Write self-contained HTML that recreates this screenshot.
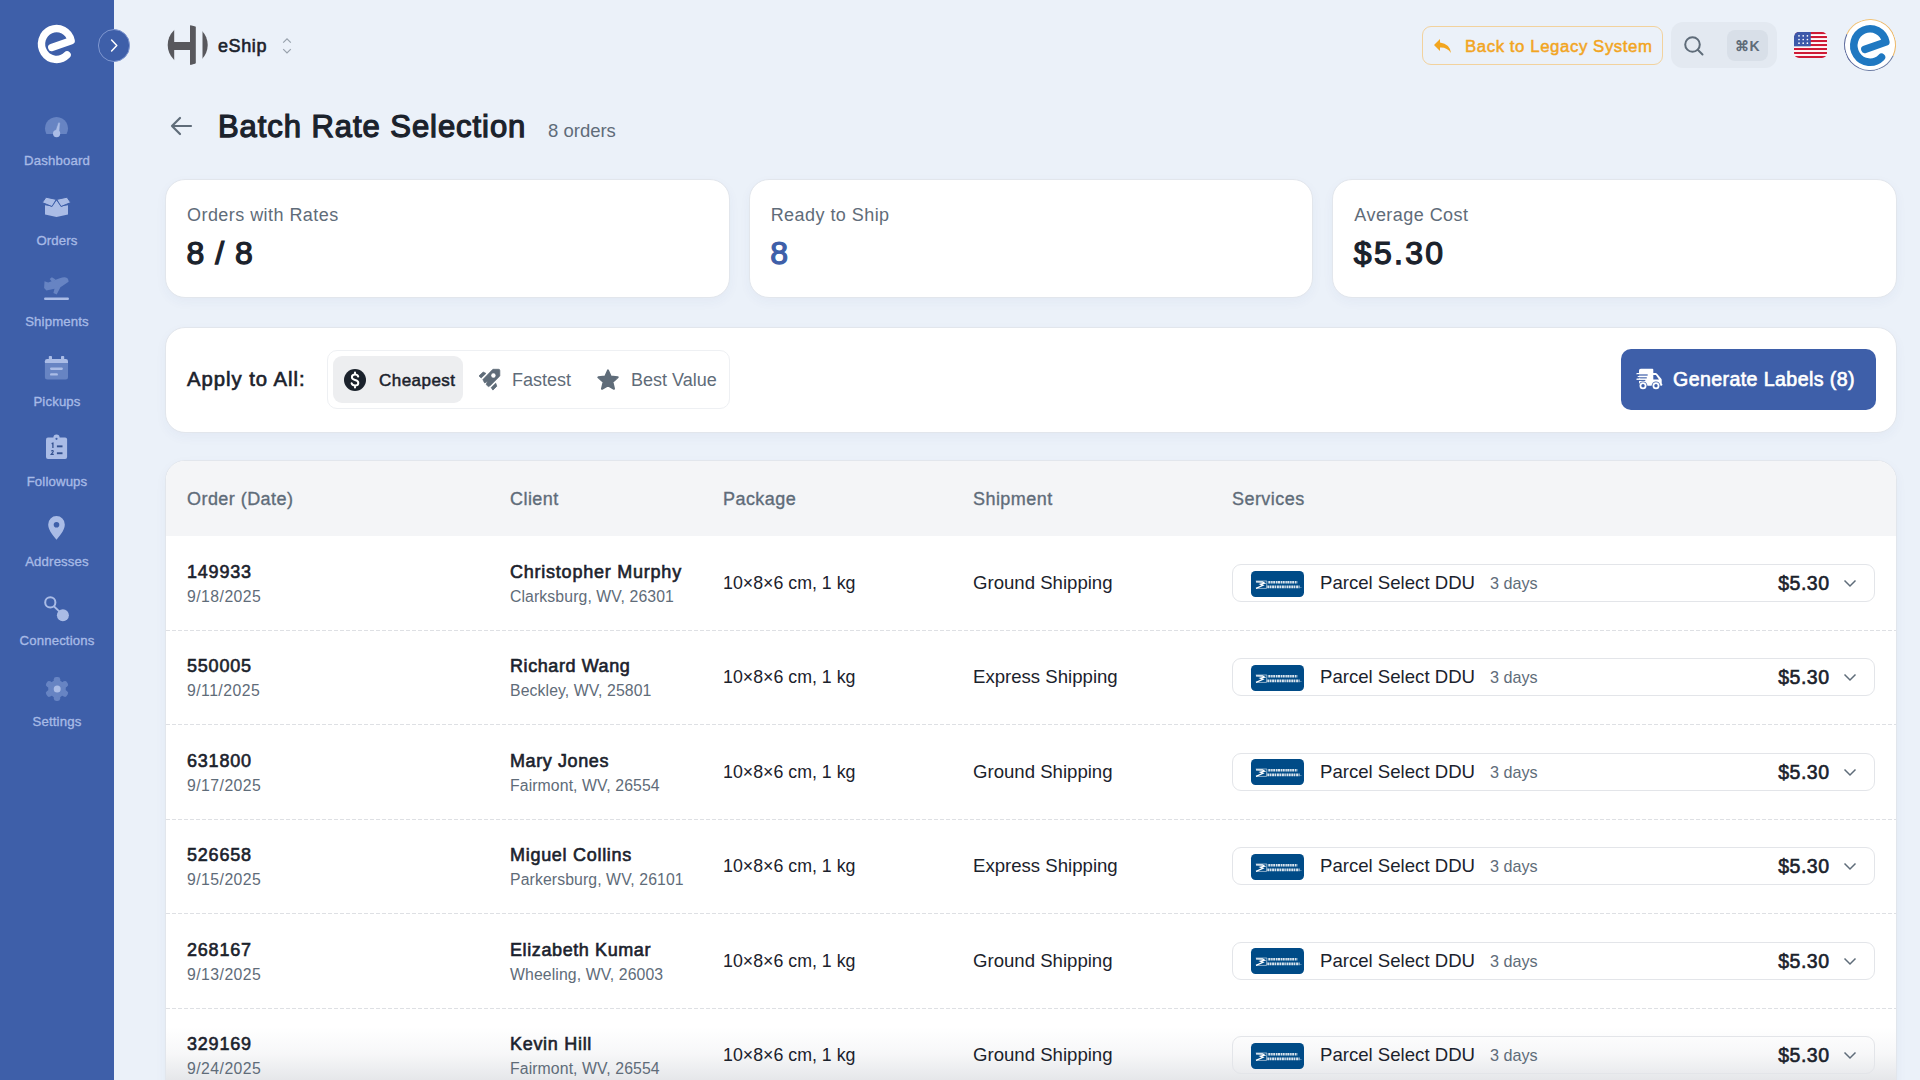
<!DOCTYPE html>
<html><head><meta charset="utf-8">
<style>
*{box-sizing:border-box;margin:0;padding:0}
html,body{width:1920px;height:1080px;overflow:hidden}
body{font-family:"Liberation Sans",sans-serif;background:#EBF1F9;color:#1B222C;position:relative}
svg{position:absolute;overflow:visible}
.sb{position:absolute;left:0;top:0;width:114px;height:1080px;background:#3E5FA9}
.nl{position:absolute;left:0;width:114px;text-align:center;color:#A7BAE6;font-size:13.2px;line-height:13px;letter-spacing:0.15px;white-space:nowrap;-webkit-text-stroke:0.35px #A7BAE6}
.card{position:absolute;background:#fff;border-radius:20px;box-shadow:0 4px 12px rgba(40,70,130,.045);border:1px solid #E2E6EC}
.lbl{position:absolute;left:21px;top:23.5px;font-size:18px;letter-spacing:0.45px;color:#5F6C79;line-height:22px;white-space:nowrap}
.val{position:absolute;left:20.5px;top:54.5px;font-size:32px;color:#1B222C;line-height:36px;white-space:nowrap}
.th{position:absolute;top:487px;font-size:18px;color:#5F6C79;line-height:24px;letter-spacing:0.45px;white-space:nowrap;-webkit-text-stroke:0.35px #5F6C79}
.t{position:absolute;line-height:22px;white-space:nowrap}
.b{font-weight:bold}
.g{color:#5F6C79}
.svc{position:absolute;left:1232px;width:643px;height:38px;border:1px solid #E3E5E9;border-radius:9px}
.div{position:absolute;left:166px;width:1730px;height:1px;background:repeating-linear-gradient(to right,#DEE0E4 0,#DEE0E4 4px,transparent 4px,transparent 6px)}
</style></head><body>

<div class="sb"></div>
<svg style="left:38px;top:25px" width="37" height="38" viewBox="0 0 40 41"><path d="M31.45 32.3 A16.2 16.7 0 1 1 35.85 17 L14.9 24.3" stroke="#fff" stroke-width="8" fill="none" stroke-linecap="round" stroke-linejoin="round"/></svg>
<div style="position:absolute;left:97.5px;top:29.2px;width:32.5px;height:32.5px;border-radius:50%;background:#3E5FA9;border:1px solid #7F97D0"></div>
<svg style="left:0;top:0" width="1" height="1"><path d="M111.6 40 L116.8 45.5 L111.6 51" stroke="#fff" stroke-width="1.5" fill="none" stroke-linecap="round" stroke-linejoin="round"/></svg>
<svg style="left:36px;top:105px" width="40" height="40" viewBox="0 0 40 40"><path d="M10.4 28.9 A11.5 11.5 0 1 1 30.6 28.9 Z" fill="#6784C3"/><path d="M18.8 27.6 L22.2 17.6 Q23.4 16.9 24.2 18 L23.4 28.2 Z" fill="#AABCE6" stroke="#6784C3" stroke-width="0.6"/><circle cx="20.6" cy="28.6" r="3.6" fill="#AABCE6"/></svg>
<div class="nl" style="top:154px">Dashboard</div>
<svg style="left:36px;top:185px" width="40" height="40" viewBox="0 0 40 40"><path d="M9 20.3 L16 21.6 L20.5 15.4 L25 21.6 L32 20.3 L32 29.6 L20.5 32 L9 29.6 Z" fill="#AABCE6"/><path d="M10 12.2 L20.3 14.4 L16 21.5 L6.3 17.6 Z M31 12.2 L20.7 14.4 L25 21.5 L34.7 17.6 Z" fill="#AABCE6" stroke="#3E5FA9" stroke-width="1" stroke-linejoin="round"/></svg>
<div class="nl" style="top:234px">Orders</div>
<svg style="left:36px;top:265px" width="40" height="40" viewBox="0 0 40 40"><path d="M8.5 16.3 L12.2 17.4 L23.7 13.3 Q27 12 28.9 12.2 Q32.6 12.6 32.6 16.7 L26.7 20.7 L24.4 22.2 L20.7 29.6 L17.4 28.1 L18.5 23.7 L10.4 25.6 L8.1 23 Z" fill="#6784C3"/><path d="M13.7 14.1 L15.9 12.2 L19.6 14.4 L16.3 17.2 Z" fill="#6784C3"/><rect x="8" y="32.6" width="25" height="2.4" rx="1.2" fill="#AABCE6"/></svg>
<div class="nl" style="top:315px">Shipments</div>
<svg style="left:36px;top:345px" width="40" height="40" viewBox="0 0 40 40"><rect x="12.8" y="11" width="3.2" height="4" rx="0.8" fill="#AABCE6"/><rect x="25" y="11" width="3.2" height="4" rx="0.8" fill="#AABCE6"/><path d="M8.9 18 L8.9 16.2 Q8.9 14 11.1 14 L29.8 14 Q32 14 32 16.2 L32 18 Z" fill="#AABCE6"/><path d="M8.9 18 L32 18 L32 32.1 Q32 34.6 29.5 34.6 L11.4 34.6 Q8.9 34.6 8.9 32.1 Z" fill="#6784C3"/><rect x="14" y="22.6" width="12.9" height="2.3" rx="1.15" fill="#AABCE6"/><rect x="14" y="28.2" width="7.9" height="2.4" rx="1.2" fill="#AABCE6"/></svg>
<div class="nl" style="top:395px">Pickups</div>
<svg style="left:36px;top:425px" width="40" height="40" viewBox="0 0 40 40"><rect x="10" y="12.6" width="21.1" height="21.3" rx="2" fill="#AABCE6"/><circle cx="20.5" cy="12.6" r="3.1" fill="#AABCE6"/><circle cx="20.5" cy="13.8" r="1.1" fill="#3E5FA9"/><path d="M15.6 18.6 L16.9 18.2 L16.9 22.9" stroke="#34518F" stroke-width="1.3" fill="none"/><path d="M15.3 26.2 Q15.8 25.4 16.8 25.6 Q17.6 26 17 27 L15.2 29.4 L17.8 29.4" stroke="#34518F" stroke-width="1.2" fill="none"/><rect x="20.9" y="20.4" width="5.6" height="1.9" fill="#34518F"/><rect x="20.9" y="27.3" width="5.6" height="1.9" fill="#34518F"/></svg>
<div class="nl" style="top:475px">Followups</div>
<svg style="left:36px;top:505px" width="40" height="40" viewBox="0 0 40 40"><path d="M20.5 34.8 C15.5 28.4 12.2 24.3 12.2 19.4 A8.3 8.3 0 0 1 28.8 19.4 C28.8 24.3 25.5 28.4 20.5 34.8 Z" fill="#AABCE6"/><circle cx="20.5" cy="19.8" r="2.8" fill="#3E5FA9"/></svg>
<div class="nl" style="top:555px">Addresses</div>
<svg style="left:36px;top:585px" width="40" height="40" viewBox="0 0 40 40"><circle cx="14.3" cy="17.4" r="5.1" stroke="#AABCE6" stroke-width="2" fill="none"/><line x1="17.6" y1="21" x2="23.5" y2="26.6" stroke="#AABCE6" stroke-width="1.8"/><circle cx="26.9" cy="30.2" r="6" fill="#AABCE6"/></svg>
<div class="nl" style="top:634.3px">Connections</div>
<svg style="left:36px;top:665px" width="40" height="40" viewBox="0 0 40 40"><g transform="translate(21 23.9)" fill="#6784C3"><circle r="8.8"/><rect x="-3.2" y="-12" width="6.4" height="7" rx="2.4" transform="rotate(0)"/><rect x="-3.2" y="-12" width="6.4" height="7" rx="2.4" transform="rotate(60)"/><rect x="-3.2" y="-12" width="6.4" height="7" rx="2.4" transform="rotate(120)"/><rect x="-3.2" y="-12" width="6.4" height="7" rx="2.4" transform="rotate(180)"/><rect x="-3.2" y="-12" width="6.4" height="7" rx="2.4" transform="rotate(240)"/><rect x="-3.2" y="-12" width="6.4" height="7" rx="2.4" transform="rotate(300)"/></g><circle cx="21.2" cy="24" r="3.5" fill="#AABCE6"/></svg>
<div class="nl" style="top:715px">Settings</div>
<svg style="left:167px;top:25px" width="42" height="40" viewBox="0 0 42 40"><defs><clipPath id="hc"><circle cx="20.7" cy="20" r="20"/></clipPath></defs><g clip-path="url(#hc)" fill="#58585D"><rect x="0" y="0" width="7.2" height="40"/><rect x="7" y="17" width="17" height="8"/><rect x="23" y="-1" width="5.8" height="42"/><rect x="35.5" y="0" width="7" height="40"/></g></svg>
<div class="t" style="left:218px;top:35px;font-size:18px;line-height:22px;letter-spacing:0.59px;-webkit-text-stroke:0.6px #1B222C">eShip</div>
<svg style="left:280px;top:37px" width="14" height="18" viewBox="0 0 14 18"><path d="M3.2 5.6 L7 1.8 L10.8 5.6 M3.2 12.2 L7 16 L10.8 12.2" stroke="#98A1AC" stroke-width="1.2" fill="none"/></svg>
<div style="position:absolute;left:1422px;top:26px;width:241px;height:39px;border:1px solid #F2D29D;border-radius:9px"></div>
<svg style="left:1432px;top:37px" width="22" height="18" viewBox="0 0 22 18"><path d="M8 2 L2 8 L8 14 L8 10.5 Q15 10 19 16 Q18 7 8 5.5 Z" fill="#F2A51F"/></svg>
<div class="t" style="left:1465px;top:35.5px;font-size:16.8px;color:#F2A51F;letter-spacing:0.58px;-webkit-text-stroke:0.5px #F2A51F">Back to Legacy System</div>
<div style="position:absolute;left:1671px;top:22px;width:106px;height:46px;background:#E3E9F1;border-radius:12px"></div>
<svg style="left:1682.2px;top:34px" width="24" height="24" viewBox="0 0 24 24"><circle cx="10.5" cy="10.5" r="7.3" stroke="#5F6C79" stroke-width="2" fill="none"/><line x1="16" y1="16" x2="20.5" y2="20.5" stroke="#5F6C79" stroke-width="2" stroke-linecap="round"/></svg>
<div style="position:absolute;left:1727px;top:30px;width:41px;height:31px;background:#D8DFE8;border-radius:8px"></div>
<div class="t b" style="left:1727px;top:35px;width:41px;text-align:center;font-size:14px;color:#5F6C79">&#8984;K</div>
<svg style="left:1794px;top:32px" width="33" height="26" viewBox="0 0 33 26"><defs><clipPath id="fc"><rect x="0" y="0" width="33" height="26" rx="5"/></clipPath></defs><g clip-path="url(#fc)"><rect width="33" height="26" fill="#fff"/><rect x="0" y="0.00" width="33" height="2.1" fill="#CE1A36"/><rect x="0" y="3.99" width="33" height="2.1" fill="#CE1A36"/><rect x="0" y="7.98" width="33" height="2.1" fill="#CE1A36"/><rect x="0" y="11.97" width="33" height="2.1" fill="#CE1A36"/><rect x="0" y="15.96" width="33" height="2.1" fill="#CE1A36"/><rect x="0" y="19.95" width="33" height="2.1" fill="#CE1A36"/><rect x="0" y="23.94" width="33" height="2.1" fill="#CE1A36"/><rect x="0" y="0" width="16.8" height="14.3" fill="#3D59AA"/><circle cx="5.0" cy="3.8" r="0.85" fill="#fff"/><circle cx="9.2" cy="3.8" r="0.85" fill="#fff"/><circle cx="13.4" cy="3.8" r="0.85" fill="#fff"/><circle cx="5.0" cy="7.5" r="0.85" fill="#fff"/><circle cx="9.2" cy="7.5" r="0.85" fill="#fff"/><circle cx="13.4" cy="7.5" r="0.85" fill="#fff"/><circle cx="5.0" cy="11.2" r="0.85" fill="#fff"/><circle cx="9.2" cy="11.2" r="0.85" fill="#fff"/><circle cx="13.4" cy="11.2" r="0.85" fill="#fff"/></g></svg>
<div style="position:absolute;left:1844.2px;top:19.3px;width:52px;height:52px;border-radius:50%;background:#fff;border:1.2px solid;border-color:#F1C47A #EDB560 #6F7FA6 #59679A;transform:rotate(-20deg)"></div>
<svg style="left:1850px;top:24.8px" width="40" height="41" viewBox="0 0 40 41"><path d="M31.45 32.3 A16.2 16.7 0 1 1 35.85 17 L14.9 24.3" stroke="#1F78C1" stroke-width="7.6" fill="none" stroke-linecap="round" stroke-linejoin="round"/></svg>
<svg style="left:168px;top:114px" width="26" height="24" viewBox="0 0 26 24"><path d="M12 4 L4 12 L12 20 M4 12 L23 12" stroke="#5F6C79" stroke-width="2.2" fill="none" stroke-linecap="round" stroke-linejoin="round"/></svg>
<div class="t" style="left:218px;top:107.5px;font-size:31px;line-height:38px;letter-spacing:0.94px;-webkit-text-stroke:1.25px #1B222C">Batch Rate Selection</div>
<div class="t g" style="left:548px;top:119.5px;font-size:18.5px">8 orders</div>
<div class="card" style="left:165px;top:179px;width:564.67px;height:118.5px"><div class="lbl">Orders with Rates</div><div class="val" style="color:#1B222C;word-spacing:1px;letter-spacing:0.5px;-webkit-text-stroke:1.25px #1B222C">8 / 8</div></div>
<div class="card" style="left:748.67px;top:179px;width:564.67px;height:118.5px"><div class="lbl">Ready to Ship</div><div class="val" style="color:#3E5FA9;letter-spacing:1px;-webkit-text-stroke:1.25px #3E5FA9">8</div></div>
<div class="card" style="left:1332.33px;top:179px;width:564.67px;height:118.5px"><div class="lbl">Average Cost</div><div class="val" style="color:#1B222C;letter-spacing:2.3px;-webkit-text-stroke:1.25px #1B222C">$5.30</div></div>
<div class="card" style="left:165px;top:327px;width:1732px;height:105.5px"></div>
<div class="t" style="left:187px;top:368px;font-size:20.3px;letter-spacing:0.98px;-webkit-text-stroke:0.65px #1B222C">Apply to All:</div>
<div style="position:absolute;left:327px;top:350px;width:403px;height:59px;border:1px solid #EEF0F3;border-radius:10px;background:#fff"></div>
<div style="position:absolute;left:333px;top:356px;width:130px;height:47px;background:#EDEEF0;border-radius:9px"></div>
<svg style="left:343px;top:368px" width="24" height="24" viewBox="0 0 24 24"><circle cx="12" cy="12" r="11" fill="#1B222C"/><path d="M15.2 8.6 Q14.6 6.6 12 6.6 Q8.9 6.6 8.9 9.2 Q8.9 11.2 12 11.9 Q15.3 12.6 15.3 14.9 Q15.3 17.4 12 17.4 Q9.2 17.4 8.6 15.2 M12 4.6 L12 6.6 M12 17.4 L12 19.4" stroke="#fff" stroke-width="2" fill="none" stroke-linecap="round"/></svg>
<div class="t" style="left:379px;top:370px;font-size:17px;letter-spacing:0.47px;-webkit-text-stroke:0.5px #1B222C">Cheapest</div>
<svg style="left:474px;top:364px" width="30" height="30" viewBox="0 0 30 30"><path d="M18.9 5.3 L24.6 5.3 Q25.8 5.3 25.8 6.6 L25.8 12 L16.1 21.7 L14.4 22.6 L12.2 20.6 L13.6 17.3 L10.6 18.9 L8.9 15.6 Z" fill="#5F6C79" stroke="#5F6C79" stroke-width=".8" stroke-linejoin="round"/><circle cx="19.4" cy="11.5" r="2.2" fill="#fff"/><path d="M5 11.9 L9.2 8.1 L11.9 9.4 L7.2 13.9 Z M17.2 23.6 L21.7 19.2 L22.8 22.2 L18.9 26.1 Z" fill="#5F6C79" stroke="#5F6C79" stroke-width=".8" stroke-linejoin="round"/></svg>
<div class="t g" style="left:512px;top:369px;font-size:18px">Fastest</div>
<svg style="left:596px;top:367.5px" width="24" height="24" viewBox="0 0 26 26"><path d="M13 2.5 L16 9.3 L23.5 10.1 L17.8 15.1 L19.5 22.5 L13 18.7 L6.5 22.5 L8.2 15.1 L2.5 10.1 L10 9.3 Z" fill="#5F6C79" stroke="#5F6C79" stroke-width="2.2" stroke-linejoin="round"/></svg>
<div class="t g" style="left:631px;top:369px;font-size:18px">Best Value</div>
<div style="position:absolute;left:1621px;top:349px;width:255px;height:61px;background:#3E5FA9;border-radius:10px"></div>
<svg style="left:1630px;top:362px" width="40" height="36" viewBox="0 0 40 36"><path d="M9 8.6 Q9 6.8 10.8 6.8 L22.4 6.8 Q23.3 6.8 23.3 7.7 L23.3 11 L25.6 11 Q26.3 11 26.8 11.6 L31.1 16.4 Q31.7 17 31.7 17.7 L31.7 21.6 Q32.4 21.9 32.4 22.6 Q32.4 23.8 31.2 23.8 L9 23.8 Z" fill="#fff"/><path d="M23.3 13 L25.9 13 L29 17.5 L23.3 17.5 Z" fill="#3E5FA9"/><rect x="6.4" y="11" width="4" height="1.4" rx=".6" fill="#fff"/><rect x="7" y="12.4" width="10.7" height="1.2" fill="#3E5FA9"/><rect x="7.6" y="14" width="3" height="1.3" rx=".6" fill="#fff"/><rect x="7" y="15.3" width="9.8" height="1.1" fill="#3E5FA9"/><rect x="6.4" y="16.5" width="4" height="1.4" rx=".6" fill="#fff"/><rect x="7" y="17.9" width="8.3" height="1" fill="#3E5FA9"/><circle cx="13" cy="23.8" r="4.4" fill="#3E5FA9"/><circle cx="26" cy="23.8" r="4.4" fill="#3E5FA9"/><circle cx="13" cy="23.8" r="3.5" fill="#fff"/><circle cx="26" cy="23.8" r="3.5" fill="#fff"/><circle cx="13" cy="23.8" r="1.7" fill="#3E5FA9"/><circle cx="26" cy="23.8" r="1.7" fill="#3E5FA9"/></svg>
<div class="t" style="left:1673px;top:368px;font-size:19.6px;color:#fff;letter-spacing:0.4px;-webkit-text-stroke:0.65px #fff">Generate Labels (8)</div>
<div style="position:absolute;left:164.7px;top:460.3px;width:1732.3px;height:700px;background:#fff;border-radius:20px;border:1px solid #E2E6EC;box-shadow:0 4px 12px rgba(40,70,130,.045);overflow:hidden"><div style="position:absolute;left:0;top:0;width:100%;height:74.5px;background:#F4F5F7"></div><div style="position:absolute;left:0;top:566px;width:100%;height:54px;background:linear-gradient(to bottom,rgba(222,224,228,0) 0%,rgba(222,224,228,.25) 50%,rgba(222,224,228,.8) 100%)"></div></div>
<div class="th" style="left:187px">Order (Date)</div>
<div class="th" style="left:510px">Client</div>
<div class="th" style="left:723px">Package</div>
<div class="th" style="left:973px">Shipment</div>
<div class="th" style="left:1232px">Services</div>
<div class="t" style="left:187px;top:561.0px;font-size:18px;letter-spacing:0.8px;-webkit-text-stroke:0.6px #1B222C">149933</div>
<div class="t g" style="left:187px;top:586.0px;font-size:15.8px;letter-spacing:0.45px">9/18/2025</div>
<div class="t" style="left:510px;top:561.0px;font-size:18px;letter-spacing:0.77px;-webkit-text-stroke:0.6px #1B222C">Christopher Murphy</div>
<div class="t g" style="left:510px;top:586.0px;font-size:15.8px;letter-spacing:0.1px">Clarksburg, WV, 26301</div>
<div class="t" style="left:723px;top:572.0px;font-size:17.8px">10×8×6 cm, 1 kg</div>
<div class="t" style="left:973px;top:572.0px;font-size:18.6px">Ground Shipping</div>
<div class="svc" style="top:564.0px"><svg style="left:18px;top:5.5px" width="53" height="26" viewBox="0 0 53 26"><rect width="53" height="26" rx="4.5" fill="#004B87"/><g fill="none" stroke="#fff"><path d="M4.8 10 L15.9 10 L15.5 17.4 L5 17.4" stroke-width=".7" opacity=".8"/><path d="M5 10.8 L11.5 11 L13.5 12.2 L9.5 13.2 L12 14.3 L5 17.4" stroke-width="1.3"/><path d="M17.3 11.3 H46.3" stroke-width="2.6" stroke-dasharray="2.2 .6 1.6 .5 2 .7 1.5 .4" opacity=".85"/><path d="M16.3 15.9 H48.6" stroke-width="2.6" stroke-dasharray="2 .5 1.7 .6 2.2 .5 1.4 .7" opacity=".85"/></g><path d="M49.5 16.5 h.8" stroke="#fff" stroke-width=".6"/></svg></div>
<div class="t" style="left:1320px;top:572.0px;font-size:18.6px">Parcel Select DDU</div>
<div class="t g" style="left:1490px;top:572.0px;font-size:16.2px">3 days</div>
<div class="t" style="left:1700px;width:129.5px;text-align:right;top:572.0px;font-size:19.5px;letter-spacing:0.5px;-webkit-text-stroke:0.6px #1B222C">$5.30</div>
<svg style="left:1842px;top:575.0px" width="16" height="16" viewBox="0 0 16 16"><path d="M2.5 5.5 L8 11 L13.5 5.5" stroke="#5F6C79" stroke-width="1.5" fill="none"/></svg>
<div class="div" style="top:630.0px"></div>
<div class="t" style="left:187px;top:655.4px;font-size:18px;letter-spacing:0.8px;-webkit-text-stroke:0.6px #1B222C">550005</div>
<div class="t g" style="left:187px;top:680.4px;font-size:15.8px;letter-spacing:0.45px">9/11/2025</div>
<div class="t" style="left:510px;top:655.4px;font-size:18px;letter-spacing:0.58px;-webkit-text-stroke:0.6px #1B222C">Richard Wang</div>
<div class="t g" style="left:510px;top:680.4px;font-size:15.8px;letter-spacing:0.1px">Beckley, WV, 25801</div>
<div class="t" style="left:723px;top:666.4px;font-size:17.8px">10×8×6 cm, 1 kg</div>
<div class="t" style="left:973px;top:666.4px;font-size:18.6px">Express Shipping</div>
<div class="svc" style="top:658.4px"><svg style="left:18px;top:5.5px" width="53" height="26" viewBox="0 0 53 26"><rect width="53" height="26" rx="4.5" fill="#004B87"/><g fill="none" stroke="#fff"><path d="M4.8 10 L15.9 10 L15.5 17.4 L5 17.4" stroke-width=".7" opacity=".8"/><path d="M5 10.8 L11.5 11 L13.5 12.2 L9.5 13.2 L12 14.3 L5 17.4" stroke-width="1.3"/><path d="M17.3 11.3 H46.3" stroke-width="2.6" stroke-dasharray="2.2 .6 1.6 .5 2 .7 1.5 .4" opacity=".85"/><path d="M16.3 15.9 H48.6" stroke-width="2.6" stroke-dasharray="2 .5 1.7 .6 2.2 .5 1.4 .7" opacity=".85"/></g><path d="M49.5 16.5 h.8" stroke="#fff" stroke-width=".6"/></svg></div>
<div class="t" style="left:1320px;top:666.4px;font-size:18.6px">Parcel Select DDU</div>
<div class="t g" style="left:1490px;top:666.4px;font-size:16.2px">3 days</div>
<div class="t" style="left:1700px;width:129.5px;text-align:right;top:666.4px;font-size:19.5px;letter-spacing:0.5px;-webkit-text-stroke:0.6px #1B222C">$5.30</div>
<svg style="left:1842px;top:669.4px" width="16" height="16" viewBox="0 0 16 16"><path d="M2.5 5.5 L8 11 L13.5 5.5" stroke="#5F6C79" stroke-width="1.5" fill="none"/></svg>
<div class="div" style="top:724.4px"></div>
<div class="t" style="left:187px;top:749.8px;font-size:18px;letter-spacing:0.8px;-webkit-text-stroke:0.6px #1B222C">631800</div>
<div class="t g" style="left:187px;top:774.8px;font-size:15.8px;letter-spacing:0.45px">9/17/2025</div>
<div class="t" style="left:510px;top:749.8px;font-size:18px;letter-spacing:0.60px;-webkit-text-stroke:0.6px #1B222C">Mary Jones</div>
<div class="t g" style="left:510px;top:774.8px;font-size:15.8px;letter-spacing:0.1px">Fairmont, WV, 26554</div>
<div class="t" style="left:723px;top:760.8px;font-size:17.8px">10×8×6 cm, 1 kg</div>
<div class="t" style="left:973px;top:760.8px;font-size:18.6px">Ground Shipping</div>
<div class="svc" style="top:752.8px"><svg style="left:18px;top:5.5px" width="53" height="26" viewBox="0 0 53 26"><rect width="53" height="26" rx="4.5" fill="#004B87"/><g fill="none" stroke="#fff"><path d="M4.8 10 L15.9 10 L15.5 17.4 L5 17.4" stroke-width=".7" opacity=".8"/><path d="M5 10.8 L11.5 11 L13.5 12.2 L9.5 13.2 L12 14.3 L5 17.4" stroke-width="1.3"/><path d="M17.3 11.3 H46.3" stroke-width="2.6" stroke-dasharray="2.2 .6 1.6 .5 2 .7 1.5 .4" opacity=".85"/><path d="M16.3 15.9 H48.6" stroke-width="2.6" stroke-dasharray="2 .5 1.7 .6 2.2 .5 1.4 .7" opacity=".85"/></g><path d="M49.5 16.5 h.8" stroke="#fff" stroke-width=".6"/></svg></div>
<div class="t" style="left:1320px;top:760.8px;font-size:18.6px">Parcel Select DDU</div>
<div class="t g" style="left:1490px;top:760.8px;font-size:16.2px">3 days</div>
<div class="t" style="left:1700px;width:129.5px;text-align:right;top:760.8px;font-size:19.5px;letter-spacing:0.5px;-webkit-text-stroke:0.6px #1B222C">$5.30</div>
<svg style="left:1842px;top:763.8px" width="16" height="16" viewBox="0 0 16 16"><path d="M2.5 5.5 L8 11 L13.5 5.5" stroke="#5F6C79" stroke-width="1.5" fill="none"/></svg>
<div class="div" style="top:818.8px"></div>
<div class="t" style="left:187px;top:844.2px;font-size:18px;letter-spacing:0.8px;-webkit-text-stroke:0.6px #1B222C">526658</div>
<div class="t g" style="left:187px;top:869.2px;font-size:15.8px;letter-spacing:0.45px">9/15/2025</div>
<div class="t" style="left:510px;top:844.2px;font-size:18px;letter-spacing:0.71px;-webkit-text-stroke:0.6px #1B222C">Miguel Collins</div>
<div class="t g" style="left:510px;top:869.2px;font-size:15.8px;letter-spacing:0.1px">Parkersburg, WV, 26101</div>
<div class="t" style="left:723px;top:855.2px;font-size:17.8px">10×8×6 cm, 1 kg</div>
<div class="t" style="left:973px;top:855.2px;font-size:18.6px">Express Shipping</div>
<div class="svc" style="top:847.2px"><svg style="left:18px;top:5.5px" width="53" height="26" viewBox="0 0 53 26"><rect width="53" height="26" rx="4.5" fill="#004B87"/><g fill="none" stroke="#fff"><path d="M4.8 10 L15.9 10 L15.5 17.4 L5 17.4" stroke-width=".7" opacity=".8"/><path d="M5 10.8 L11.5 11 L13.5 12.2 L9.5 13.2 L12 14.3 L5 17.4" stroke-width="1.3"/><path d="M17.3 11.3 H46.3" stroke-width="2.6" stroke-dasharray="2.2 .6 1.6 .5 2 .7 1.5 .4" opacity=".85"/><path d="M16.3 15.9 H48.6" stroke-width="2.6" stroke-dasharray="2 .5 1.7 .6 2.2 .5 1.4 .7" opacity=".85"/></g><path d="M49.5 16.5 h.8" stroke="#fff" stroke-width=".6"/></svg></div>
<div class="t" style="left:1320px;top:855.2px;font-size:18.6px">Parcel Select DDU</div>
<div class="t g" style="left:1490px;top:855.2px;font-size:16.2px">3 days</div>
<div class="t" style="left:1700px;width:129.5px;text-align:right;top:855.2px;font-size:19.5px;letter-spacing:0.5px;-webkit-text-stroke:0.6px #1B222C">$5.30</div>
<svg style="left:1842px;top:858.2px" width="16" height="16" viewBox="0 0 16 16"><path d="M2.5 5.5 L8 11 L13.5 5.5" stroke="#5F6C79" stroke-width="1.5" fill="none"/></svg>
<div class="div" style="top:913.2px"></div>
<div class="t" style="left:187px;top:938.6px;font-size:18px;letter-spacing:0.8px;-webkit-text-stroke:0.6px #1B222C">268167</div>
<div class="t g" style="left:187px;top:963.6px;font-size:15.8px;letter-spacing:0.45px">9/13/2025</div>
<div class="t" style="left:510px;top:938.6px;font-size:18px;letter-spacing:0.60px;-webkit-text-stroke:0.6px #1B222C">Elizabeth Kumar</div>
<div class="t g" style="left:510px;top:963.6px;font-size:15.8px;letter-spacing:0.1px">Wheeling, WV, 26003</div>
<div class="t" style="left:723px;top:949.6px;font-size:17.8px">10×8×6 cm, 1 kg</div>
<div class="t" style="left:973px;top:949.6px;font-size:18.6px">Ground Shipping</div>
<div class="svc" style="top:941.6px"><svg style="left:18px;top:5.5px" width="53" height="26" viewBox="0 0 53 26"><rect width="53" height="26" rx="4.5" fill="#004B87"/><g fill="none" stroke="#fff"><path d="M4.8 10 L15.9 10 L15.5 17.4 L5 17.4" stroke-width=".7" opacity=".8"/><path d="M5 10.8 L11.5 11 L13.5 12.2 L9.5 13.2 L12 14.3 L5 17.4" stroke-width="1.3"/><path d="M17.3 11.3 H46.3" stroke-width="2.6" stroke-dasharray="2.2 .6 1.6 .5 2 .7 1.5 .4" opacity=".85"/><path d="M16.3 15.9 H48.6" stroke-width="2.6" stroke-dasharray="2 .5 1.7 .6 2.2 .5 1.4 .7" opacity=".85"/></g><path d="M49.5 16.5 h.8" stroke="#fff" stroke-width=".6"/></svg></div>
<div class="t" style="left:1320px;top:949.6px;font-size:18.6px">Parcel Select DDU</div>
<div class="t g" style="left:1490px;top:949.6px;font-size:16.2px">3 days</div>
<div class="t" style="left:1700px;width:129.5px;text-align:right;top:949.6px;font-size:19.5px;letter-spacing:0.5px;-webkit-text-stroke:0.6px #1B222C">$5.30</div>
<svg style="left:1842px;top:952.6px" width="16" height="16" viewBox="0 0 16 16"><path d="M2.5 5.5 L8 11 L13.5 5.5" stroke="#5F6C79" stroke-width="1.5" fill="none"/></svg>
<div class="div" style="top:1007.6px"></div>
<div class="t" style="left:187px;top:1033.0px;font-size:18px;letter-spacing:0.8px;-webkit-text-stroke:0.6px #1B222C">329169</div>
<div class="t g" style="left:187px;top:1058.0px;font-size:15.8px;letter-spacing:0.45px">9/24/2025</div>
<div class="t" style="left:510px;top:1033.0px;font-size:18px;letter-spacing:0.70px;-webkit-text-stroke:0.6px #1B222C">Kevin Hill</div>
<div class="t g" style="left:510px;top:1058.0px;font-size:15.8px;letter-spacing:0.1px">Fairmont, WV, 26554</div>
<div class="t" style="left:723px;top:1044.0px;font-size:17.8px">10×8×6 cm, 1 kg</div>
<div class="t" style="left:973px;top:1044.0px;font-size:18.6px">Ground Shipping</div>
<div class="svc" style="top:1036.0px"><svg style="left:18px;top:5.5px" width="53" height="26" viewBox="0 0 53 26"><rect width="53" height="26" rx="4.5" fill="#004B87"/><g fill="none" stroke="#fff"><path d="M4.8 10 L15.9 10 L15.5 17.4 L5 17.4" stroke-width=".7" opacity=".8"/><path d="M5 10.8 L11.5 11 L13.5 12.2 L9.5 13.2 L12 14.3 L5 17.4" stroke-width="1.3"/><path d="M17.3 11.3 H46.3" stroke-width="2.6" stroke-dasharray="2.2 .6 1.6 .5 2 .7 1.5 .4" opacity=".85"/><path d="M16.3 15.9 H48.6" stroke-width="2.6" stroke-dasharray="2 .5 1.7 .6 2.2 .5 1.4 .7" opacity=".85"/></g><path d="M49.5 16.5 h.8" stroke="#fff" stroke-width=".6"/></svg></div>
<div class="t" style="left:1320px;top:1044.0px;font-size:18.6px">Parcel Select DDU</div>
<div class="t g" style="left:1490px;top:1044.0px;font-size:16.2px">3 days</div>
<div class="t" style="left:1700px;width:129.5px;text-align:right;top:1044.0px;font-size:19.5px;letter-spacing:0.5px;-webkit-text-stroke:0.6px #1B222C">$5.30</div>
<svg style="left:1842px;top:1047.0px" width="16" height="16" viewBox="0 0 16 16"><path d="M2.5 5.5 L8 11 L13.5 5.5" stroke="#5F6C79" stroke-width="1.5" fill="none"/></svg>
</body></html>
